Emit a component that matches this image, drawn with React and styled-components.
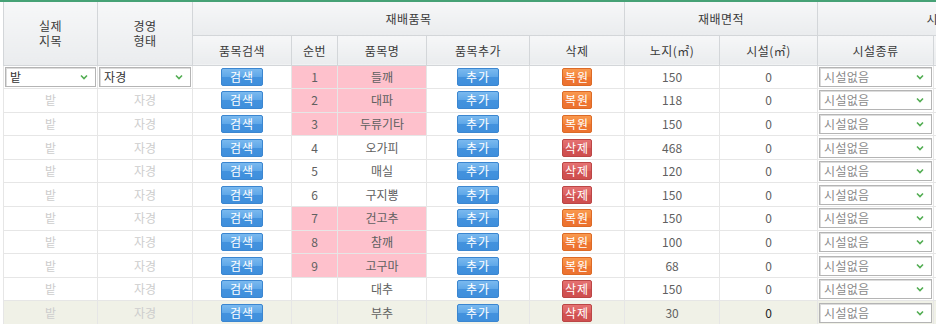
import styled, { createGlobalStyle } from "styled-components";

const GlobalStyle = createGlobalStyle`
  html, body {
    margin: 0;
    padding: 0;
    background: #fff;
    overflow: hidden;
  }
  body {
    font-family: "Noto Sans CJK KR", "Noto Sans", sans-serif;
    font-size: 12px;
    color: #555;
  }
`;

const rows = [
  { no: "1", name: "들깨", pink: true, restore: true, open: "150", house: "0" },
  { no: "2", name: "대파", pink: true, restore: true, open: "118", house: "0" },
  { no: "3", name: "두류기타", pink: true, restore: true, open: "150", house: "0" },
  { no: "4", name: "오가피", open: "468", house: "0" },
  { no: "5", name: "매실", open: "120", house: "0" },
  { no: "6", name: "구지뽕", open: "150", house: "0" },
  { no: "7", name: "건고추", pink: true, restore: true, open: "150", house: "0" },
  { no: "8", name: "참깨", pink: true, restore: true, open: "100", house: "0" },
  { no: "9", name: "고구마", pink: true, restore: true, open: "68", house: "0" },
  { no: "", name: "대추", open: "150", house: "0" },
  { no: "", name: "부추", open: "30", house: "0", active: true },
];

const widths = [94, 95, 99, 46, 89, 103, 95, 95, 98, 116, 74, 74];

function Chevron() {
  return (
    <ChevronIcon width="8" height="6" viewBox="0 0 8 6">
      <polyline
        points="1,1.5 4,4.5 7,1.5"
        fill="none"
        stroke="#52ad52"
        strokeWidth="1.6"
      />
    </ChevronIcon>
  );
}

function Select({ value, $dim }) {
  return (
    <SelectBox>
      <SelectText $dim={$dim}>{value}</SelectText>
      <Chevron />
    </SelectBox>
  );
}

export default function App() {
  return (
    <>
      <GlobalStyle />
      <Wrapper>
        <Table>
          <colgroup>
            {widths.map((w, i) => (
              <col key={i} style={{ width: w }} />
            ))}
          </colgroup>
          <thead>
            <HeadRow $h={33}>
              <HeadCell rowSpan={2}>
                실제
                <br />
                지목
              </HeadCell>
              <HeadCell rowSpan={2}>
                경영
                <br />
                형태
              </HeadCell>
              <HeadCell colSpan={5}>재배품목</HeadCell>
              <HeadCell colSpan={2}>재배면적</HeadCell>
              <HeadCell colSpan={3}>시설정보</HeadCell>
            </HeadRow>
            <HeadRow $h={30}>
              <HeadCell>품목검색</HeadCell>
              <HeadCell>순번</HeadCell>
              <HeadCell>품목명</HeadCell>
              <HeadCell>품목추가</HeadCell>
              <HeadCell>삭제</HeadCell>
              <HeadCell>노지(㎡)</HeadCell>
              <HeadCell>시설(㎡)</HeadCell>
              <HeadCell>시설종류</HeadCell>
              <HeadCell>동수</HeadCell>
              <HeadCell>비고</HeadCell>
            </HeadRow>
          </thead>
          <tbody>
            {rows.map((r, i) => (
              <Row key={i} $active={r.active}>
                {i === 0 ? (
                  <>
                    <SelectCell>
                      <Select value="밭" />
                    </SelectCell>
                    <SelectCell>
                      <Select value="자경" />
                    </SelectCell>
                  </>
                ) : (
                  <>
                    <Cell $muted>밭</Cell>
                    <Cell $muted>자경</Cell>
                  </>
                )}
                <Cell>
                  <Button $kind="blue" $w={42}>
                    검색
                  </Button>
                </Cell>
                <Cell $pink={r.pink}>{r.no}</Cell>
                <Cell $pink={r.pink}>{r.name}</Cell>
                <Cell>
                  <Button $kind="blue" $w={42}>
                    추가
                  </Button>
                </Cell>
                <Cell>
                  {r.restore ? (
                    <Button $kind="orange" $w={30}>
                      복원
                    </Button>
                  ) : (
                    <Button $kind="red" $w={30}>
                      삭제
                    </Button>
                  )}
                </Cell>
                <Cell>{r.open}</Cell>
                <Cell $strong={r.active}>{r.house}</Cell>
                <SelectCell>
                  <Select value="시설없음" $dim />
                </SelectCell>
                <Cell />
                <Cell />
              </Row>
            ))}
          </tbody>
        </Table>
      </Wrapper>
    </>
  );
}

const Wrapper = styled.div`
  width: 936px;
  height: 324px;
  overflow: hidden;
  border-top: 2px solid #46a276;
  box-sizing: border-box;
  padding-left: 3px;
`;

const Table = styled.table`
  table-layout: fixed;
  border-collapse: collapse;
  width: 1078px;
`;

const HeadRow = styled.tr`
  height: ${(p) => p.$h}px;
`;

const HeadCell = styled.th`
  padding: 0;
  font-weight: 400;
  font-size: 12px;
  line-height: 15px;
  color: #3a3a3a;
  letter-spacing: 0.5px;
  text-align: center;
  vertical-align: middle;
  background: linear-gradient(#f6f7f8, #eaecee);
  border: 1px solid #d3d6d9;
  border-top: none;
  white-space: nowrap;
`;

const Row = styled.tr`
  height: 23.6px;
  background: ${(p) => (p.$active ? "#f0f1e7" : "#fff")};
`;

const Cell = styled.td`
  padding: 0;
  text-align: center;
  vertical-align: middle;
  font-size: 12px;
  line-height: 14px;
  white-space: nowrap;
  color: ${(p) => (p.$muted ? "#cdcdcd" : p.$strong ? "#222" : "#606060")};
  background: ${(p) => (p.$pink ? "#fec1cc" : "transparent")};
  border: 1px solid #e6e6e6;
`;

const SelectCell = styled(Cell)`
  padding: 0 1px;
`;

const SelectBox = styled.div`
  height: 20px;
  box-sizing: border-box;
  display: flex;
  align-items: center;
  justify-content: space-between;
  padding: 0 7px 0 4px;
  background: #fff;
  border: 1px solid #b4b4b4;
  box-shadow: inset 1px 1px 0 #dcdcdc;
`;

const SelectText = styled.span`
  font-size: 12px;
  line-height: 14px;
  color: ${(p) => (p.$dim ? "#8a8a8a" : "#333")};
  letter-spacing: 0.3px;
`;

const ChevronIcon = styled.svg`
  display: block;
  flex: none;
`;

const buttonColors = {
  blue: {
    bg: "linear-gradient(#7ab9ef 0%, #5ea7e8 50%, #4392de 51%, #3f8fdc 100%)",
    border: "#3b86d0",
  },
  orange: {
    bg: "linear-gradient(#f9994f 0%, #f4843a 50%, #ef7630 51%, #ec7230 100%)",
    border: "#dc6a26",
  },
  red: {
    bg: "linear-gradient(#e57272 0%, #da5f5f 50%, #d25252 51%, #cf4f4f 100%)",
    border: "#bb4646",
  },
};

const Button = styled.span`
  display: inline-block;
  width: ${(p) => p.$w}px;
  height: 18px;
  box-sizing: border-box;
  line-height: 16px;
  font-size: 12px;
  letter-spacing: 1px;
  color: #fff;
  text-align: center;
  vertical-align: middle;
  border-radius: 2px;
  background: ${(p) => buttonColors[p.$kind].bg};
  border: 1px solid ${(p) => buttonColors[p.$kind].border};
  cursor: pointer;
`;
